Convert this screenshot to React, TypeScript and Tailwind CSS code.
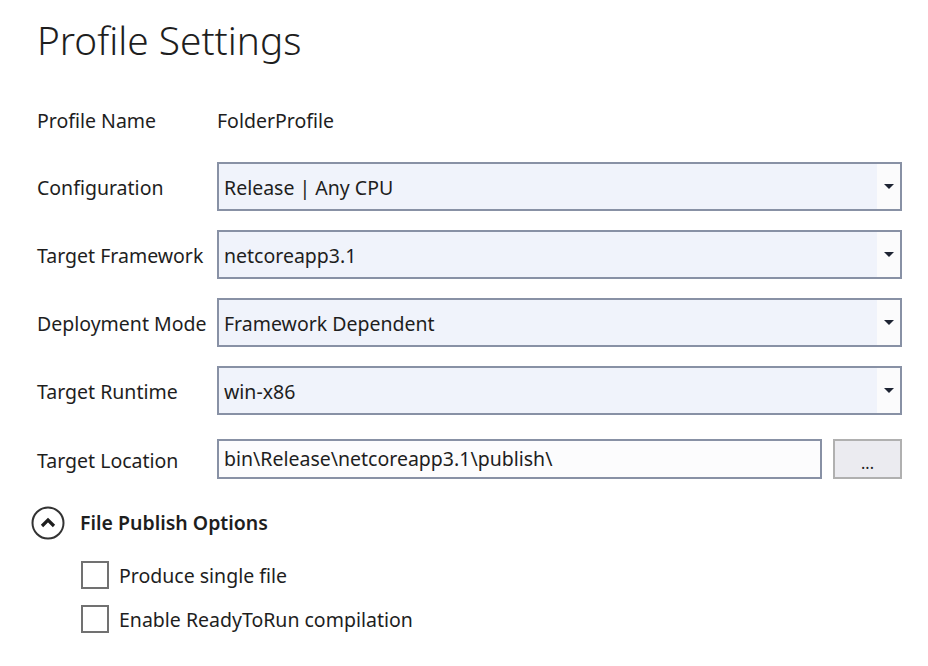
import React, {useState} from 'react';

const FONT = {fontFamily: '"Noto Sans", "Open Sans", sans-serif'};

const rows = [
    {label: 'Configuration', value: 'Release | Any CPU'},
    {label: 'Target Framework', value: 'netcoreapp3.1'},
    {label: 'Deployment Mode', value: 'Framework Dependent'},
    {label: 'Target Runtime', value: 'win-x86'}
];

const Dropdown: React.FC<{value: string}> = ({value}) => (
    <div className="flex h-[49px] flex-1 items-stretch border-2 border-[#8891a5] bg-[#f0f3fb]">
        <div className="flex flex-1 items-center px-[5px] pt-[3px] text-[19.5px] text-[#1e1e1e]">{value}</div>
        <div className="flex w-[23px] items-center justify-center bg-[#fbfbfc]">
            <svg width="10" height="5" viewBox="0 0 10 5">
                <path d="M0 0h10L5 5z" fill="#1e2433"/>
            </svg>
        </div>
    </div>
);

const Checkbox: React.FC<{label: string}> = ({label}) => {
    const [checked, setChecked] = useState(false);
    return (
        <label className="flex h-[28px] cursor-pointer items-center gap-[10px]">
            <span
                onClick={() => setChecked(!checked)}
                className="flex h-[28px] w-[28px] items-center justify-center border-2 border-[#717171] bg-white"
            >
                {checked && (
                    <svg width="16" height="16" viewBox="0 0 16 16">
                        <path d="M2 8l4 4 8-9" stroke="#1e1e1e" strokeWidth="2" fill="none"/>
                    </svg>
                )}
            </span>
            <span className="pt-[2px] text-[19.5px] text-[#1e1e1e]">{label}</span>
        </label>
    );
};

const App: React.FC = () => {
    return (
        <div className="h-[666px] w-[928px] overflow-hidden bg-white" style={FONT}>
            <div className="flex flex-col pl-[37px] pr-[26px] pt-[12px]">
                <h1 className="text-[38.8px] font-light leading-[56px] text-[#1e1e1e]">Profile Settings</h1>

                <div className="mt-[38px] flex h-[30px] items-center text-[19.5px] text-[#1e1e1e]">
                    <span className="w-[180px]">Profile Name</span>
                    <span>FolderProfile</span>
                </div>

                <div className="mt-[26px] flex flex-col gap-[19px]">
                    {rows.map(r => (
                        <div key={r.label} className="flex items-center">
                            <span className="w-[180px] pt-[3px] text-[19.5px] text-[#1e1e1e]">{r.label}</span>
                            <Dropdown value={r.value}/>
                        </div>
                    ))}
                </div>

                <div className="mt-[24px] flex items-center">
                    <span className="w-[180px] pt-[3px] text-[19.5px] text-[#1e1e1e]">Target Location</span>
                    <div className="flex h-[40px] flex-1 items-center gap-[11px]">
                        <div className="flex h-full flex-1 items-center border-2 border-[#8891a5] bg-[#fcfcfd] px-[5px] text-[19.5px] text-[#1e1e1e]">
                            bin\Release\netcoreapp3.1\publish\
                        </div>
                        <button className="flex h-full w-[69px] items-end justify-center border-2 border-[#b0b0b0] bg-[#ebebf0] pb-[6px] text-[16px] leading-none text-[#1e1e1e]">
                            ...
                        </button>
                    </div>
                </div>

                <div className="mt-[27px] flex items-center gap-[15px]">
                    <svg width="34" height="34" viewBox="0 0 34 34" className="-ml-[6px]">
                        <circle cx="17" cy="17" r="15.5" stroke="#333" strokeWidth="2" fill="none"/>
                        <path d="M11 20l6-6 6 6" stroke="#1e1e1e" strokeWidth="3.2" fill="none"/>
                    </svg>
                    <span className="text-[19.5px] font-semibold text-[#1e1e1e]">File Publish Options</span>
                </div>

                <div className="mt-[21px] flex flex-col gap-[16px] pl-[44px]">
                    <Checkbox label="Produce single file"/>
                    <Checkbox label="Enable ReadyToRun compilation"/>
                </div>
            </div>
        </div>
    );
};

export default App;
